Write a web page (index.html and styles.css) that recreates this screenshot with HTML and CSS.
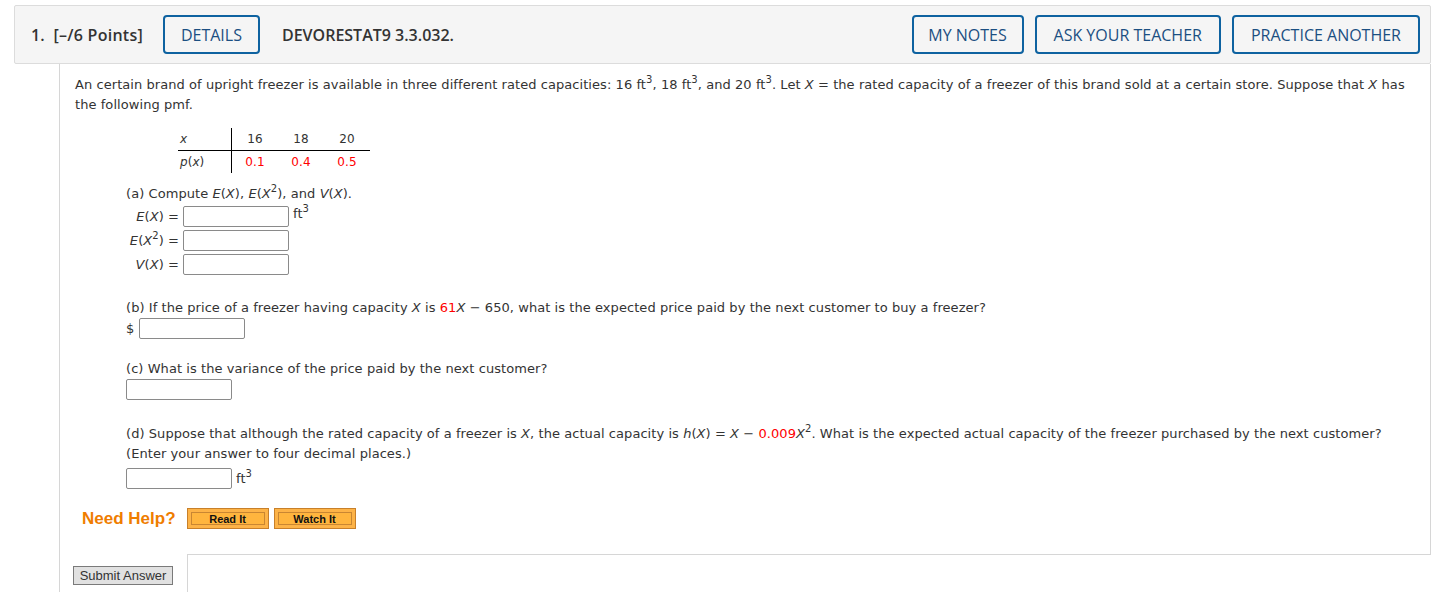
FILE: index.html
```html
<!DOCTYPE html>
<html>
<head>
<meta charset="utf-8">
<link rel="stylesheet" href="styles.css">
</head>
<body>
<div class="question">
  <div class="qhead">
    <span class="qnum">1.</span>
    <span class="qpts">[–/6 Points]</span>
    <button class="hbtn details">DETAILS</button>
    <span class="qid">DEVORESTAT9 3.3.032.</span>
    <div class="hright">
      <button class="hbtn mynotes">MY NOTES</button>
      <button class="hbtn">ASK YOUR TEACHER</button>
      <button class="hbtn">PRACTICE ANOTHER</button>
    </div>
  </div>
  <div class="qbody">
    <div class="qcontent">
      <p class="intro">An certain brand of upright freezer is available in three different rated capacities: 16 ft<sup>3</sup>, 18 ft<sup>3</sup>, and 20 ft<sup>3</sup>. Let <i>X</i> = the rated capacity of a freezer of this brand sold at a certain store. Suppose that <i>X</i> has<br>the following pmf.</p>
      <table class="pmf">
        <tr class="r1"><td class="lab"><i>x</i></td><td>16</td><td>18</td><td>20</td></tr>
        <tr class="r2"><td class="lab"><i>p</i>(<i>x</i>)</td><td class="red">0.1</td><td class="red">0.4</td><td class="red">0.5</td></tr>
      </table>
      <div class="part parta">
        <div class="ptext">(a) Compute <i>E</i>(<i>X</i>), <i>E</i>(<i>X</i><sup>2</sup>), and <i>V</i>(<i>X</i>).</div>
        <div class="agrid">
          <span class="alab"><i>E</i>(<i>X</i>) =</span><span class="box"></span><span class="unit">ft<sup>3</sup></span>
          <span class="alab"><i>E</i>(<i>X</i><sup>2</sup>) =</span><span class="box"></span><span></span>
          <span class="alab"><i>V</i>(<i>X</i>) =</span><span class="box"></span><span></span>
        </div>
      </div>
      <div class="part partb">
        <div class="ptext">(b) If the price of a freezer having capacity <i>X</i> is <span class="red">61</span><i>X</i> − 650, what is the expected price paid by the next customer to buy a freezer?</div>
        <div class="arow"><span class="dollar">$</span><span class="box"></span></div>
      </div>
      <div class="part partc">
        <div class="ptext">(c) What is the variance of the price paid by the next customer?</div>
        <div class="arow"><span class="box"></span></div>
      </div>
      <div class="part partd">
        <div class="ptext">(d) Suppose that although the rated capacity of a freezer is <i>X</i>, the actual capacity is <i>h</i>(<i>X</i>) = <i>X</i> − <span class="red">0.009</span><i>X</i><sup>2</sup>. What is the expected actual capacity of the freezer purchased by the next customer?<br>(Enter your answer to four decimal places.)</div>
        <div class="arow"><span class="box"></span><span class="unit">ft<sup>3</sup></span></div>
      </div>
      <div class="help">
        <span class="needhelp">Need Help?</span>
        <button class="obtn">Read It</button>
        <button class="obtn">Watch It</button>
      </div>
    </div>
    <div class="qfoot">
      <div class="subcell"><button class="submit">Submit Answer</button></div>
      <div class="resp"></div>
    </div>
  </div>
</div>
</body>
</html>
```

FILE: styles.css
```css
html, body {
  margin: 0;
  padding: 0;
  background: #fff;
}
body {
  padding: 5px 9px 0 14px;
  font-family: "DejaVu Sans", Verdana, sans-serif;
  font-size: 13px;
  color: #333;
}
.question {
  width: 1417px;
}
.qhead {
  display: flex;
  align-items: center;
  height: 57px;
  background: #f5f5f5;
  border: 1px solid #dcdcdc;
  border-radius: 2px;
  padding: 0 10px 0 16px;
  font-family: "Open Sans", sans-serif;
  font-size: 16px;
  color: #333;
}
.qnum {
  font-weight: 600;
  margin-right: 9px;
}
.qpts {
  font-weight: 600;
  letter-spacing: 0.25px;
  margin-right: 20px;
}
.qid {
  font-weight: 600;
  margin-left: 22px;
}
.hbtn {
  box-sizing: border-box;
  height: 39px;
  padding: 0 17px;
  background: transparent;
  border: 2px solid #0e62a0;
  border-radius: 4px;
  font-family: "Open Sans", sans-serif;
  font-size: 16px;
  color: #1b4f82;
  cursor: pointer;
}
.details {
  width: 97px;
  padding: 0;
}
.mynotes {
  width: 112px;
  padding: 0;
}
.hright {
  margin-left: auto;
  display: flex;
  gap: 11px;
}
.qbody {
  margin-left: 45px;
  border-left: 1px solid #d6d6d6;
}
.qcontent {
  border-right: 1px solid #d6d6d6;
  padding: 11px 15px 25px 15px;
  line-height: 20px;
  letter-spacing: 0.065px;
}
.intro {
  margin: 0;
}
sup {
  font-size: 10px;
  line-height: 0;
  vertical-align: 6px;
}
i {
  font-style: italic;
}
.red {
  color: #f00;
}
.pmf {
  border-collapse: collapse;
  margin: 13px 0 0 103px;
  font-size: 12px;
}
.pmf td {
  padding: 0;
  height: 22px;
  width: 46px;
  text-align: center;
}
.pmf td.lab {
  width: 51px;
  text-align: left;
  padding-left: 2px;
  border-right: 1px solid #000;
}
.pmf .r1 td {
  border-bottom: 1px solid #000;
  vertical-align: middle;
}
.part {
  margin-left: 51px;
}
.parta {
  margin-top: 11px;
}
.agrid {
  display: grid;
  grid-template-columns: 53px 106px auto;
  column-gap: 4px;
  row-gap: 3px;
  align-items: center;
  margin-top: 2px;
}
.alab {
  text-align: right;
  white-space: nowrap;
}
.box {
  display: inline-block;
  box-sizing: border-box;
  width: 106px;
  height: 21px;
  border: 1px solid #8a8a8a;
  border-radius: 2px;
  background: #fff;
}
.unit {
  align-self: start;
  line-height: 16px;
}
.partb {
  margin-top: 23px;
}
.partc {
  margin-top: 20px;
}
.partd {
  margin-top: 24px;
}
.arow {
  display: flex;
  align-items: center;
  gap: 4px;
  height: 21px;
}
.partd .arow {
  margin-top: 4px;
}
.partd .unit {
  align-self: center;
}
.dollar {
  width: 9px;
}
.help {
  display: flex;
  align-items: center;
  gap: 5px;
  margin: 19px 0 0 7px;
  letter-spacing: 0;
}
.needhelp {
  font-family: "Liberation Sans", Arial, sans-serif;
  font-weight: bold;
  font-size: 17px;
  color: #ef7d00;
  margin-right: 6px;
}
.obtn {
  box-sizing: border-box;
  width: 82px;
  min-width: 82px;
  height: 21px;
  padding: 0;
  background: #ffb53e;
  border: 1px solid #c8802a;
  box-shadow: inset 0 0 0 3px #fdb347, inset 0 0 0 4px #c98632;
  font-family: "Liberation Sans", Arial, sans-serif;
  font-weight: bold;
  font-size: 11px;
  color: #111;
  cursor: pointer;
}
.qfoot {
  display: flex;
  height: 38px;
}
.subcell {
  width: 127px;
  padding: 12px 0 0 13px;
  box-sizing: border-box;
}
.submit {
  box-sizing: border-box;
  width: 100px;
  height: 19px;
  padding: 0;
  background: #e1e1e1;
  border: 1px solid #7a7a7a;
  border-radius: 0;
  font-family: "Liberation Sans", Arial, sans-serif;
  font-size: 13px;
  color: #333;
}
.resp {
  flex: 1;
  border-top: 1px solid #d6d6d6;
  border-left: 1px solid #d6d6d6;
}
```
